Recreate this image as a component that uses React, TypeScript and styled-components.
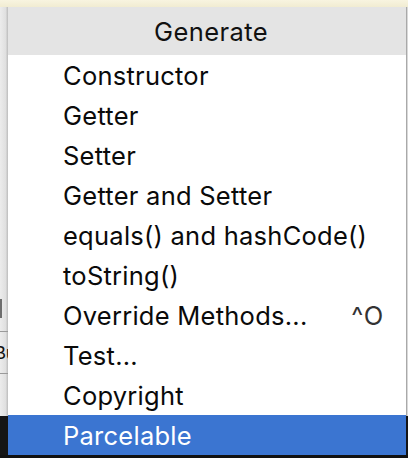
import React from "react";
import styled, { createGlobalStyle } from "styled-components";

const Global = createGlobalStyle`
  html, body { margin: 0; padding: 0; background: #111; }
  body { font-family: Inter, "Liberation Sans", Arial, sans-serif; -webkit-font-smoothing: antialiased; }
`;

const Page = styled.div`
  width: 408px;
  height: 458px;
  display: flex;
  flex-direction: column;
  overflow: hidden;
  background: #111;
`;

const TopStrip = styled.div`
  height: 7px;
  flex: none;
  background: linear-gradient(#f8f4e0, #f1ecd2);
`;

const Middle = styled.div`
  display: flex;
  flex: none;
`;

const LeftStrip = styled.div`
  width: 8px;
  flex: none;
  display: flex;
  flex-direction: column;
  background: linear-gradient(to right, #ececec, #e0e0e0 70%, #bcbcbc);
`;

const StripGap = styled.div<{ $h: number }>`
  height: ${(p) => p.$h}px;
  flex: none;
`;

const StripKnob = styled.div`
  height: 19px;
  width: 2px;
  flex: none;
  background: #6e6e6e;
`;

const StripLine = styled.div`
  height: 1px;
  flex: none;
  background: #9a9a9a;
`;

const StripText = styled.div`
  height: 22px;
  flex: none;
  overflow: hidden;
  font-family: "Liberation Sans", Arial, sans-serif;
  font-size: 18px;
  line-height: 22px;
  color: #111;
  white-space: nowrap;
  text-indent: -6px;
`;

const StripDark = styled.div`
  flex: 1;
  background: #151515;
`;

const RightStrip = styled.div`
  width: 2px;
  flex: none;
  display: flex;
  flex-direction: column;
  background: linear-gradient(to right, #a9a9a9 50%, #d9d9d9 50%);
`;

const RightLight = styled.div`
  height: 409px;
  flex: none;
`;

const RightDark = styled.div`
  flex: 1;
  background: #151515;
`;

const Menu = styled.div`
  flex: 1;
  display: flex;
  flex-direction: column;
  background: #ffffff;
`;

const Header = styled.div`
  height: 48px;
  display: flex;
  align-items: center;
  justify-content: center;
  background: #e4e4e4;
  font-size: 25.5px;
  letter-spacing: 0.4px;
  color: #111;
  padding: 1px 0 0 8px;
  box-sizing: border-box;
`;

const Item = styled.div<{ $active?: boolean }>`
  height: 40px;
  display: flex;
  align-items: center;
  justify-content: space-between;
  padding: 0 22px 0 55px;
  box-sizing: border-box;
  font-size: 25.5px;
  letter-spacing: 0.25px;
  background: ${(p) => (p.$active ? "#3b75d1" : "transparent")};
  color: ${(p) => (p.$active ? "#ffffff" : "#0a0a0a")};
`;

const Shortcut = styled.span`
  color: #333;
  font-size: 25.5px;
  letter-spacing: 0.8px;
`;

const BottomStrip = styled.div`
  flex: 1;
  background: #111;
`;

const items: { label: string; shortcut?: string; active?: boolean }[] = [
  { label: "Constructor" },
  { label: "Getter" },
  { label: "Setter" },
  { label: "Getter and Setter" },
  { label: "equals() and hashCode()" },
  { label: "toString()" },
  { label: "Override Methods...", shortcut: "^O" },
  { label: "Test..." },
  { label: "Copyright" },
  { label: "Parcelable", active: true },
];

export default function App() {
  return (
    <>
      <Global />
      <Page>
        <TopStrip />
        <Middle>
          <LeftStrip>
            <StripGap $h={292} />
            <StripKnob />
            <StripGap $h={13} />
            <StripLine />
            <StripGap $h={10} />
            <StripText>Bu</StripText>
            <StripGap $h={9} />
            <StripLine />
            <StripGap $h={42} />
            <StripDark />
          </LeftStrip>
          <Menu>
            <Header>Generate</Header>
            {items.map((it) => (
              <Item key={it.label} $active={it.active}>
                <span>{it.label}</span>
                {it.shortcut && <Shortcut>{it.shortcut}</Shortcut>}
              </Item>
            ))}
          </Menu>
          <RightStrip>
            <RightLight />
            <RightDark />
          </RightStrip>
        </Middle>
        <BottomStrip />
      </Page>
    </>
  );
}
